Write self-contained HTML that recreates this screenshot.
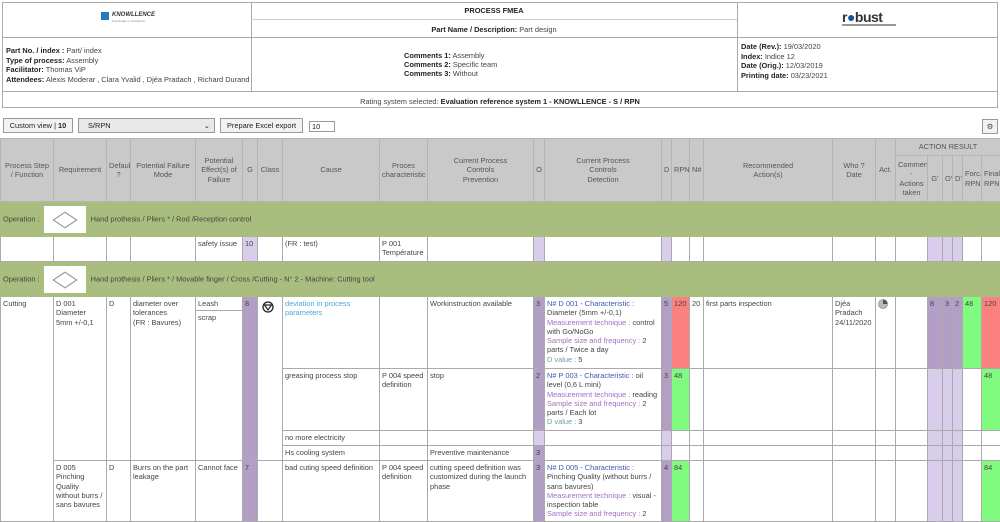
<!DOCTYPE html>
<html><head><meta charset="utf-8"><style>
*{box-sizing:border-box;margin:0;padding:0}
body{width:1000px;height:517px;overflow:hidden;background:#fff;font-family:"Liberation Sans",sans-serif;font-size:7.4px;color:#444;position:relative}
.a{position:absolute}
b{color:#222}
table{border-collapse:collapse;table-layout:fixed;position:absolute;left:0;top:138px;width:1000px}
td,th{border:1px solid #aaa;vertical-align:top;padding:2px 2px;font-weight:normal;line-height:9.3px;overflow:hidden}
th{background:#c9c9c9;vertical-align:middle;text-align:center;color:#555;border-color:#b4b4b4}
.op td{background:#a9bd7f;border-color:#a9bd7f;vertical-align:middle}
.pd{background:#b39fc6}
.pl{background:#d8cdea}
.r{background:#fb8080}
.g{background:#80fb80}
.bl{color:#3b5bb0}.pu{color:#a070c0}.cy{color:#6aa0a8}.lb{color:#4aa8d8}
.dia{display:inline-block;width:42px;height:27px;background:#fff;vertical-align:middle;margin:0 3px 0 2px;position:relative}
.dia:after{content:"";position:absolute;left:15px;top:8px;width:10px;height:10px;border:1px solid #999;transform:scaleX(1.5) rotate(45deg)}
</style></head><body>
<div class="a" style="left:2px;top:2px;width:996px;height:106px;border:1px solid #aaa"></div>
<div class="a" style="left:251px;top:2px;width:1px;height:89px;background:#aaa"></div>
<div class="a" style="left:737px;top:2px;width:1px;height:89px;background:#aaa"></div>
<div class="a" style="left:2px;top:37px;width:996px;height:1px;background:#aaa"></div>
<div class="a" style="left:2px;top:91px;width:996px;height:1px;background:#aaa"></div>
<div class="a" style="left:251px;top:19px;width:486px;height:1px;background:#ccc"></div>
<div class="a" style="left:101px;top:12px;width:8px;height:8px;background:#2a78b8"></div>
<div class="a" style="left:112px;top:12px;font-size:6px;font-weight:bold;font-style:italic;color:#333">KNOWLLENCE</div>
<div class="a" style="left:112px;top:19px;font-size:3px;color:#888">Knowledge in excellence</div>
<div class="a" style="left:251px;top:6px;width:486px;text-align:center;font-weight:bold;color:#222">PROCESS FMEA</div>
<div class="a" style="left:251px;top:25px;width:486px;text-align:center"><b>Part Name / Description:</b> Part design</div>
<div class="a" style="left:842px;top:9px;font-size:14px;font-weight:bold;color:#333;letter-spacing:-0.5px">r<span style="color:#1a4f9a">●</span>bust</div>
<div class="a" style="left:842px;top:24px;width:54px;height:2px;background:#999"></div>
<div class="a" style="left:6px;top:46px;line-height:9.5px"><b>Part No. / index :</b> Part/ index<br><b>Type of process:</b> Assembly<br><b>Facilitator:</b> Thomas ViP<br><b>Attendees:</b> Alexis Moderar , Clara Yvalid , Djéa Pradach , Richard Durand</div>
<div class="a" style="left:404px;top:51px;line-height:9px"><b>Comments 1:</b> Assembly<br><b>Comments 2:</b> Specific team<br><b>Comments 3:</b> Without</div>
<div class="a" style="left:741px;top:42px;line-height:9.5px"><b>Date (Rev.):</b> 19/03/2020<br><b>Index:</b> Indice 12<br><b>Date (Orig.):</b> 12/03/2019<br><b>Printing date:</b> 03/23/2021</div>
<div class="a" style="left:2px;top:97px;width:996px;text-align:center">Rating system selected: <b>Evaluation reference system 1 - KNOWLLENCE - S / RPN</b></div>
<div class="a" style="left:3px;top:118px;width:70px;height:15px;border:1px solid #999;background:#f2f2f2;color:#222;text-align:center;line-height:13px">Custom view | <b>10</b></div>
<div class="a" style="left:78px;top:118px;width:137px;height:15px;border:1px solid #999;background:#e8e8e8;color:#222;padding-left:9px;line-height:13px">S/RPN<span style="position:absolute;right:4px">⌄</span></div>
<div class="a" style="left:220px;top:118px;width:83px;height:15px;border:1px solid #999;background:#f2f2f2;color:#222;text-align:center;line-height:13px">Prepare Excel export</div>
<div class="a" style="left:309px;top:121px;width:26px;height:11px;border:1px solid #999;padding-left:2px;line-height:9px;color:#222">10</div>
<div class="a" style="left:982px;top:119px;width:16px;height:15px;border:1px solid #999;background:#f2f2f2;text-align:center;line-height:13px">⚙</div>
<table>
<colgroup><col style="width:53px"><col style="width:53px"><col style="width:24px"><col style="width:65px"><col style="width:47px"><col style="width:15px"><col style="width:25px"><col style="width:97px"><col style="width:48px"><col style="width:106px"><col style="width:11px"><col style="width:117px"><col style="width:10px"><col style="width:18px"><col style="width:14px"><col style="width:129px"><col style="width:43px"><col style="width:20px"><col style="width:32px"><col style="width:15px"><col style="width:10px"><col style="width:10px"><col style="width:19px"><col style="width:19px"></colgroup>
<tr style="height:17px"><th rowspan="2">Process Step / Function</th><th rowspan="2">Requirement</th><th rowspan="2">Default ?</th><th rowspan="2">Potential Failure Mode</th><th rowspan="2">Potential Effect(s) of Failure</th><th rowspan="2">G</th><th rowspan="2">Class</th><th rowspan="2">Cause</th><th rowspan="2">Proces characteristic</th><th rowspan="2">Current Process<br>Controls<br>Prevention</th><th rowspan="2">O</th><th rowspan="2">Current Process<br>Controls<br>Detection</th><th rowspan="2">D</th><th rowspan="2">RPN</th><th rowspan="2">N#</th><th rowspan="2">Recommended<br>Action(s)</th><th rowspan="2">Who ?<br>Date</th><th rowspan="2">Act.</th><th colspan="6">ACTION RESULT</th></tr>
<tr style="height:46px"><th>Comment - Actions taken</th><th>G'</th><th>O'</th><th>D'</th><th>Forc. RPN</th><th>Final RPN</th></tr>
<tr class="op" style="height:35px"><td colspan="24">Operation : <span class="dia"></span> Hand prothesis / Pliers * / Rod /Reception control</td></tr>
<tr style="height:25px"><td></td><td></td><td></td><td></td><td>safety issue</td><td class="pl">10</td><td></td><td>(FR : test)</td><td>P 001 Température</td><td></td><td class="pl"></td><td></td><td class="pl"></td><td></td><td></td><td></td><td></td><td></td><td></td><td class="pl"></td><td class="pl"></td><td class="pl"></td><td></td><td></td></tr>
<tr class="op" style="height:35px"><td colspan="24">Operation : <span class="dia"></span> Hand prothesis / Pliers * / Movable finger / Cross /Cutting - N° 2 - Machine:  Cutting tool</td></tr>
<tr style="height:72px"><td rowspan="5">Cutting</td><td rowspan="4">D 001<br>Diameter<br>5mm +/-0,1</td><td rowspan="4">D</td><td rowspan="4">diameter over tolerances<br>(FR : Bavures)</td><td rowspan="4" style="padding:0"><div style="border-bottom:1px solid #aaa;padding:2px">Leash</div><div style="padding:2px">scrap</div></td><td rowspan="4" class="pd">8</td><td rowspan="4"><svg width="12" height="12" viewBox="0 0 12 12" style="margin:2px 0 0 2px"><circle cx="6" cy="6" r="5" fill="none" stroke="#222" stroke-width="1.3"/><path d="M2.5 4 H9.5 L6 9 Z" fill="none" stroke="#222" stroke-width="1.2"/></svg></td><td class="lb">deviation in process parameters</td><td></td><td>Workinstruction available</td><td class="pd">3</td><td><span class="bl">N# D 001 - Characteristic :</span> Diameter (5mm +/-0,1)<br><span class="pu">Measurement technique :</span> control with Go/NoGo<br><span class="pu">Sample size and frequency :</span> 2 parts / Twice a day<br><span class="cy">D value :</span> 5</td><td class="pd">5</td><td class="r">120</td><td>20</td><td>first parts inspection</td><td>Djéa Pradach 24/11/2020</td><td><svg width="10" height="10" viewBox="0 0 10 10"><circle cx="5" cy="5" r="4.5" fill="#bbb" stroke="#777" stroke-width=".6"/><path d="M5 5 V0.5 A4.5 4.5 0 0 1 9.5 5 Z" fill="#555"/></svg></td><td></td><td class="pd">8</td><td class="pd">3</td><td class="pd">2</td><td class="g">48</td><td class="r">120</td></tr>
<tr style="height:62px"><td>greasing process stop</td><td>P 004 speed definition</td><td>stop</td><td class="pd">2</td><td><span class="bl">N# P 003 - Characteristic :</span> oil level (0,6 L mini)<br><span class="pu">Measurement technique :</span> reading<br><span class="pu">Sample size and frequency :</span> 2 parts / Each lot<br><span class="cy">D value :</span> 3</td><td class="pd">3</td><td class="g">48</td><td></td><td></td><td></td><td></td><td></td><td class="pl"></td><td class="pl"></td><td class="pl"></td><td></td><td class="g">48</td></tr>
<tr style="height:15px"><td>no more electricity</td><td></td><td></td><td class="pl"></td><td></td><td class="pl"></td><td></td><td></td><td></td><td></td><td></td><td></td><td class="pl"></td><td class="pl"></td><td class="pl"></td><td></td><td></td></tr>
<tr style="height:15px"><td>Hs cooling system</td><td></td><td>Preventive maintenance</td><td class="pd">3</td><td></td><td class="pl"></td><td></td><td></td><td></td><td></td><td></td><td></td><td class="pl"></td><td class="pl"></td><td class="pl"></td><td></td><td></td></tr>
<tr style="height:60px"><td>D 005<br>Pinching Quality without burrs / sans bavures</td><td>D</td><td>Burrs on the part leakage</td><td>Cannot face</td><td class="pd">7</td><td></td><td>bad cuting speed definition</td><td>P 004 speed definition</td><td>cutting speed definition was customized during the launch phase</td><td class="pd">3</td><td><span class="bl">N# D 005 - Characteristic :</span> Pinching Quality (without burrs / sans bavures)<br><span class="pu">Measurement technique :</span> visual - inspection table<br><span class="pu">Sample size and frequency :</span> 2</td><td class="pd">4</td><td class="g">84</td><td></td><td></td><td></td><td></td><td></td><td class="pl"></td><td class="pl"></td><td class="pl"></td><td></td><td class="g">84</td></tr>
</table>
</body></html>
